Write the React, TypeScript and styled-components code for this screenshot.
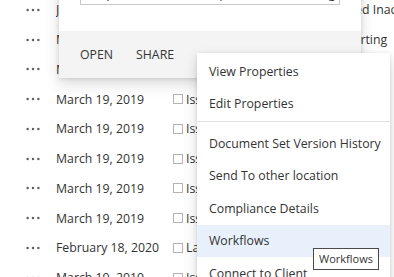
import React from "react";
import styled, { createGlobalStyle } from "styled-components";

const Global = createGlobalStyle`
  html, body { margin: 0; padding: 0; background: #ffffff; }
  body { font-family: "Open Sans", "Noto Sans", sans-serif; overflow: hidden; }
  * { box-sizing: border-box; }
`;

const Page = styled.div`
  position: relative;
  width: 394px;
  height: 277px;
  overflow: hidden;
  background: #ffffff;
`;

const List = styled.div`
  margin-top: -5px;
  display: flex;
  flex-direction: column;
`;

const Row = styled.div`
  display: grid;
  grid-template-columns: 30px 117px 13px 145px auto;
  align-items: center;
  height: 29.75px;
  padding-left: 26px;
  white-space: nowrap;
  font-size: 12.3px;
  color: #333333;
`;

const Cell = styled.span`
  overflow: hidden;
`;

const Check = styled.span`
  width: 10px;
  height: 10px;
  border: 1px solid #b3b3b3;
  background: #ffffff;
`;

const Dots = () => (
  <svg width="14" height="4" viewBox="0 0 14 4" aria-hidden>
    <circle cx="1.6" cy="2" r="1.25" fill="#606060" />
    <circle cx="7" cy="2" r="1.25" fill="#606060" />
    <circle cx="12.4" cy="2" r="1.25" fill="#606060" />
  </svg>
);

const Callout = styled.div`
  position: absolute;
  left: 59px;
  top: -47px;
  width: 302px;
  background: #ffffff;
  box-shadow: 0 6px 14px rgba(0, 0, 0, 0.14), 0 1px 4px rgba(0, 0, 0, 0.12);
`;

const CalloutBody = styled.div`
  padding: 20px 21px 26px;
`;

const UrlField = styled.div`
  height: 32px;
  border: 1px solid #c8c8c8;
  display: flex;
  align-items: flex-end;
  padding: 0 8px 1px;
  font-size: 13px;
  line-height: 20px;
  color: #333333;
  white-space: nowrap;
  overflow: hidden;
`;

const CalloutFooter = styled.div`
  display: flex;
  align-items: center;
  gap: 23px;
  height: 47px;
  padding: 0 21px;
  background: #f4f4f4;
`;

const FooterButton = styled.button`
  border: none;
  background: none;
  padding: 0;
  font-family: inherit;
  font-size: 12.3px;
  text-transform: uppercase;
  color: #333333;
`;

const Menu = styled.div`
  position: absolute;
  left: 197px;
  top: 53px;
  width: 193px;
  padding-top: 2px;
  background: #ffffff;
  box-shadow: 0 6px 14px rgba(0, 0, 0, 0.14), 0 1px 4px rgba(0, 0, 0, 0.12);
`;

const MenuItem = styled.div<{ $active?: boolean }>`
  display: flex;
  align-items: center;
  height: 32.5px;
  padding: 0 12px;
  font-size: 12.3px;
  color: #333333;
  white-space: nowrap;
  background: ${(p) => (p.$active ? "#e8f1fb" : "transparent")};
`;

const Divider = styled.div`
  height: 1px;
  margin: 1px 0 5px;
  background: #e1dfdd;
`;

const Tooltip = styled.div`
  position: absolute;
  left: 313px;
  top: 248px;
  height: 22px;
  padding: 0 5px;
  border: 1px solid #4a4a4a;
  background: #ffffff;
  font-size: 11px;
  line-height: 20px;
  color: #333333;
  white-space: nowrap;
`;

const rows = [
  { date: "January 7, 2020", text: "Issued", far: "Closed Inactive" },
  { date: "March 19, 2019", text: "Issued", far: "Reporting" },
  { date: "March 19, 2019", text: "Issued", far: "" },
  { date: "March 19, 2019", text: "Issued", far: "" },
  { date: "March 19, 2019", text: "Issued", far: "" },
  { date: "March 19, 2019", text: "Issued", far: "" },
  { date: "March 19, 2019", text: "Issued", far: "" },
  { date: "March 19, 2019", text: "Issued", far: "" },
  { date: "February 18, 2020", text: "Lapsed", far: "" },
  { date: "March 19, 2019", text: "Issued", far: "" },
];

export default function App() {
  return (
    <Page>
      <Global />
      <List>
        {rows.map((r, i) => (
          <Row key={i}>
            <Dots />
            <Cell>{r.date}</Cell>
            <Check />
            <Cell>{r.text}</Cell>
            <Cell>{r.far}</Cell>
          </Row>
        ))}
      </List>
      <Callout>
        <CalloutBody>
          <UrlField>https://contoso.sharepoint.com/sites/legal/typing_policy</UrlField>
        </CalloutBody>
        <CalloutFooter>
          <FooterButton>Open</FooterButton>
          <FooterButton>Share</FooterButton>
        </CalloutFooter>
      </Callout>
      <Menu>
        <MenuItem>View Properties</MenuItem>
        <MenuItem>Edit Properties</MenuItem>
        <Divider />
        <MenuItem>Document Set Version History</MenuItem>
        <MenuItem>Send To other location</MenuItem>
        <MenuItem>Compliance Details</MenuItem>
        <MenuItem $active>Workflows</MenuItem>
        <MenuItem>Connect to Client</MenuItem>
      </Menu>
      <Tooltip>Workflows</Tooltip>
    </Page>
  );
}
